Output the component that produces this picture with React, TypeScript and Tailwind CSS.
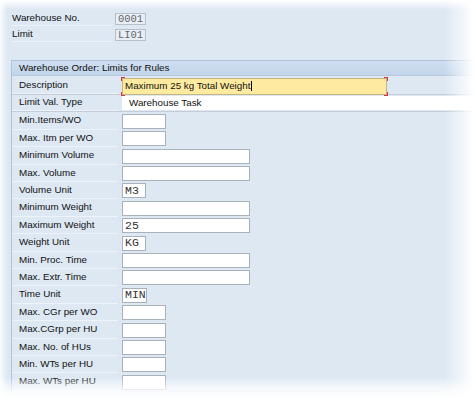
type Row = {
    label: string;
    kind?: "desc" | "band";
    w?: string;
    value?: string;
};

const rows: Row[] = [
    { label: "Description", kind: "desc" },
    { label: "Limit Val. Type", kind: "band", value: "Warehouse Task" },
    { label: "Min.Items/WO", w: "w-[44px]" },
    { label: "Max. Itm per WO", w: "w-[44px]" },
    { label: "Minimum Volume", w: "w-[128px]" },
    { label: "Max. Volume", w: "w-[128px]" },
    { label: "Volume Unit", w: "w-[24px]", value: "M3" },
    { label: "Minimum Weight", w: "w-[128px]" },
    { label: "Maximum Weight", w: "w-[128px]", value: "25" },
    { label: "Weight Unit", w: "w-[24px]", value: "KG" },
    { label: "Min. Proc. Time", w: "w-[128px]" },
    { label: "Max. Extr. Time", w: "w-[128px]" },
    { label: "Time Unit", w: "w-[25px]", value: "MIN" },
    { label: "Max. CGr per WO", w: "w-[44px]" },
    { label: "Max.CGrp per HU", w: "w-[44px]" },
    { label: "Max. No. of HUs", w: "w-[44px]" },
    { label: "Min. WTs per HU", w: "w-[44px]" },
    { label: "Max. WTs per HU", w: "w-[44px]" },
];

const sans = "font-['Liberation_Sans',Arial,sans-serif]";
const mono = "font-['Liberation_Mono','Courier_New',monospace]";

function TopRow({ label, value }: { label: string; value: string }) {
    return (
        <div className="flex h-[14px] items-center">
            <div className="w-[100px] h-full flex items-center border-b border-[#eef3f9] text-[#111]">
                {label}
            </div>
            <div
                className={`ml-[3px] w-[31px] h-[12px] border border-[#b7bfc9] bg-[#e7eef6] text-[#666] text-[10.5px] leading-[10px] flex items-center justify-center ${mono}`}
            >
                {value}
            </div>
        </div>
    );
}

function Corner({ pos }: { pos: string }) {
    return <span className={`absolute w-[4px] h-[4px] border-[#d2344a] ${pos}`} />;
}

function Field({ row }: { row: Row }) {
    if (row.kind === "desc") {
        return (
            <div className="relative w-[265px] h-[17px] bg-[#ffeb9f] border border-[#c7b57b] flex items-center pl-[2px] text-[9.8px] text-[#111]">
                Maximum 25 kg Total Weight
                <span className="ml-[1px] w-px h-[10px] bg-black" />
                <Corner pos="-left-[2px] -top-[2px] border-l border-t" />
                <Corner pos="-left-[2px] -bottom-[2px] border-l border-b" />
                <Corner pos="-right-[2px] -top-[2px] border-r border-t" />
                <Corner pos="-right-[2px] -bottom-[2px] border-r border-b" />
            </div>
        );
    }
    if (row.kind === "band") {
        return (
            <div className="w-[360px] h-[14px] bg-white flex items-center pl-[7px] text-[9.8px] text-[#111]">
                {row.value}
            </div>
        );
    }
    return (
        <div
            className={`${row.w} h-[15px] bg-white border border-[#a9b1bb] flex items-center pl-[2px] text-[11.5px] text-[#333] ${mono}`}
        >
            {row.value}
        </div>
    );
}

export default function App() {
    return (
        <div className={`relative w-[474px] h-[399px] overflow-hidden bg-[#dde8f3] text-[9.8px] ${sans}`}>
            <div className="pt-[12px] pl-[12px] flex flex-col gap-[2px]">
                <TopRow label="Warehouse No." value="0001" />
                <TopRow label="Limit" value="LI01" />
            </div>

            <div className="mt-[18px] ml-[11px] border-l border-t border-[#adc1d8]">
                <div className="h-[15px] bg-linear-to-b from-[#cfdff0] to-[#c2d5ea] border-b border-[#b5c8dd] flex items-center pl-[7px] text-[#111]">
                    Warehouse Order: Limits for Rules
                </div>
                <div className="pt-[2px]">
                    {rows.map((row, i) => {
                        const tall = i % 5 === 2 || i % 5 === 4;
                        const full = row.kind === "desc" || row.kind === "band";
                        return (
                            <div
                                key={row.label}
                                className={`flex ${tall ? "h-[18px]" : "h-[17px]"} ${full ? "border-b border-[#c3ccd8]" : ""}`}
                            >
                                <div className="w-[106px] shrink-0 flex items-center pl-[7px] border-b border-[#eef3f9] text-[#111]">
                                    {row.label}
                                </div>
                                <div className="pl-[4px] flex items-center">
                                    <Field row={row} />
                                </div>
                            </div>
                        );
                    })}
                </div>
            </div>

            {/* soft white vignette around the shot */}
            <div className="absolute top-0 left-0 w-full h-[10px] bg-linear-to-b from-white to-white/0" />
            <div className="absolute top-0 left-0 h-full w-[7px] bg-linear-to-r from-white/90 to-white/0" />
            <div className="absolute top-0 right-0 h-full w-[30px] bg-linear-to-r from-white/0 to-white" />
            <div className="absolute bottom-0 left-0 w-full h-[22px] bg-linear-to-b from-white/0 via-white/70 to-white" />
        </div>
    );
}
